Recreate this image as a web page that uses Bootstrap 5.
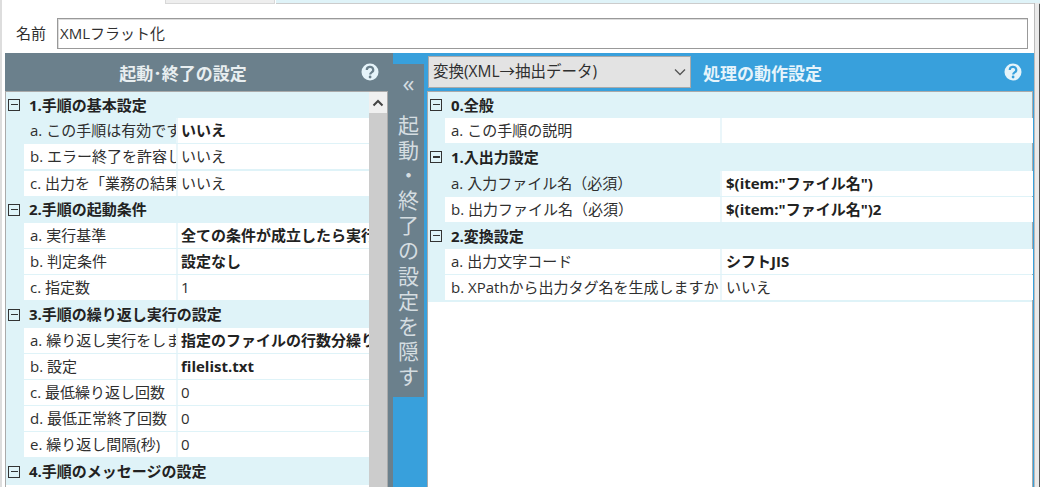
<!DOCTYPE html>
<html lang="ja"><head><meta charset="utf-8">
<link href="https://cdn.jsdelivr.net/npm/bootstrap@5.3.0/dist/css/bootstrap.min.css" rel="stylesheet">
<style>
html,body{height:487px;overflow:hidden;background:#fff}
body{font-family:"Open Sans","Noto Sans CJK JP",sans-serif;font-size:15px;color:#2f2f2f;line-height:1}
.jp{font-family:"Noto Sans CJK JP",sans-serif}
.frame{height:487px;width:1040px;border-left:2px solid #ddd;border-right:1px solid #555;position:relative}
.edge{position:absolute;right:0;top:3px;bottom:0;width:5px;background:#eaeaea;border-left:1px solid #bbb}
.tabstrip{height:4px;margin-left:163px;margin-right:-1px}
.tab-off{width:110px;background:#eee;border:1px solid #d8d8d8;border-top:0;margin-right:1px}
.tab-on{background:#dff3f8;border-bottom:1px solid #ccc}
.namerow{height:49px;padding:10px 8px 0 14px}
.namelbl{width:41px}
.nameinp{height:31px;width:971px;border:1px solid #999;padding:0 2px;line-height:29px;box-shadow:inset 1px 1px 0 #ddd}
.panels{height:434px;padding-left:3px}
.pleft{width:388px;background:#6b808c;padding-right:5px}
.phead{height:38px;color:#e8eef0;font-weight:700;font-size:17px}
.ttl-l{width:352px;text-align:center;padding-left:4px;flex:none}
.ico-l{margin-left:4px}
.qicon{width:18px;height:18px;display:block;flex:none}
.treewrap{height:396px;width:383px;border:1px solid #aaa;border-bottom:0;background:#fff;overflow:hidden}
.treecol{width:363px;overflow:hidden;flex:none}
.sbar{width:18px;background:#ccc;flex:none}
.sup{height:21px;background:#f0f0f0}
.grp{height:26.2px;background:#dff3f8;font-weight:700;color:#222}
.box{width:12px;height:12px;border:1.4px solid #333;margin:0 9px 0 2px;flex:none;position:relative;display:block}
.box::after{content:"";position:absolute;left:1.5px;right:1.5px;top:4px;height:1.4px;background:#333}
.rw{height:26.2px;background:#dff3f8;padding-left:18px}
.lab,.val{height:25px;background:#fff;white-space:nowrap;overflow:hidden;padding-left:6px;line-height:25px;flex:none}
.lab.tint{background:#dff3f8}
.rw .gapx{width:2px;background:#eaf6fa;flex:none;height:25px}
.lw-l{width:152px}.vw-l{width:191px;padding-left:3px}
.strong{font-weight:700;color:#222}
.pright{width:641px;background:#38a0dc;position:relative}
.hide-bar{position:absolute;left:0;top:11px;width:31px;height:333px;background:#6b808c;color:#d5dde1;text-align:center;z-index:1}
.chev{font-size:24px;height:40px;line-height:38px}
.vtxt{font-size:21px;line-height:25.1px;margin-top:8px}
.vtxt span{display:block}
.rhead{height:38px;padding-left:35px}
.sel{width:263px;height:32px;background:#e3e3e3;border:1px solid #aaa;padding:0 4px;font-size:15.5px;margin-right:12px;flex:none}
.ttl-r{color:#e6f4fb;font-weight:700;font-size:17px;width:301px;flex:none}
.rbody{margin-left:34px;width:606px;height:396px;background:#fff;border-top:1px solid #aaa;border-left:1px solid #aaa;border-right:1px solid #aaa;margin-right:1px}
.lw-r{width:275px}.vw-r{width:311px;padding-left:4px}
.rbody .rw{padding-left:17px}
</style></head><body>
<div class="frame">
<div class="edge"></div>
<div class="tabstrip d-flex"><div class="tab-off"></div><div class="tab-on flex-grow-1"></div></div>
<div class="namerow d-flex align-items-center">
<div class="namelbl">名前</div><div class="nameinp">XMLフラット化</div>
</div>
<div class="panels d-flex">
<div class="pleft">
<div class="phead d-flex align-items-center"><div class="ttl-l jp">起動･終了の設定</div>
<svg class="qicon ico-l" viewBox="0 0 18 18"><circle cx="9" cy="9" r="8.5" fill="#e6f4fa"/><path d="M5.8 7a3.2 3 0 1 1 4.6 2.6c-.9.5-1.2.9-1.2 2" fill="none" stroke="#6b808c" stroke-width="2.2"/><circle cx="9.1" cy="14" r="1.4" fill="#6b808c"/></svg></div>
<div class="treewrap d-flex">
<div class="treecol">
<div class="grp d-flex align-items-center"><i class="box"></i>1.手順の基本設定</div>
<div class="rw d-flex"><div class="lab tint lw-l">a. この手順は有効ですか</div><div class="gapx"></div><div class="val vw-l strong">いいえ</div></div>
<div class="rw d-flex"><div class="lab lw-l">b. エラー終了を許容しますか</div><div class="gapx"></div><div class="val vw-l">いいえ</div></div>
<div class="rw d-flex"><div class="lab lw-l">c. 出力を「業務の結果」に</div><div class="gapx"></div><div class="val vw-l">いいえ</div></div>
<div class="grp d-flex align-items-center"><i class="box"></i>2.手順の起動条件</div>
<div class="rw d-flex"><div class="lab lw-l">a. 実行基準</div><div class="gapx"></div><div class="val vw-l strong">全ての条件が成立したら実行</div></div>
<div class="rw d-flex"><div class="lab lw-l">b. 判定条件</div><div class="gapx"></div><div class="val vw-l strong">設定なし</div></div>
<div class="rw d-flex"><div class="lab lw-l">c. 指定数</div><div class="gapx"></div><div class="val vw-l">1</div></div>
<div class="grp d-flex align-items-center"><i class="box"></i>3.手順の繰り返し実行の設定</div>
<div class="rw d-flex"><div class="lab lw-l">a. 繰り返し実行をします</div><div class="gapx"></div><div class="val vw-l strong">指定のファイルの行数分繰り返す</div></div>
<div class="rw d-flex"><div class="lab lw-l">b. 設定</div><div class="gapx"></div><div class="val vw-l strong">filelist.txt</div></div>
<div class="rw d-flex"><div class="lab lw-l">c. 最低繰り返し回数</div><div class="gapx"></div><div class="val vw-l">0</div></div>
<div class="rw d-flex"><div class="lab lw-l">d. 最低正常終了回数</div><div class="gapx"></div><div class="val vw-l">0</div></div>
<div class="rw d-flex"><div class="lab lw-l">e. 繰り返し間隔(秒)</div><div class="gapx"></div><div class="val vw-l">0</div></div>
<div class="grp d-flex align-items-center"><i class="box"></i>4.手順のメッセージの設定</div>
</div>
<div class="sbar"><div class="sup d-flex align-items-center justify-content-center"><svg width="12" height="8" viewBox="0 0 12 8"><path d="M1.5 6.5 6 2l4.500 4.500" fill="none" stroke="#444" stroke-width="2"/></svg></div></div>
</div>
</div>
<div class="pright">
<div class="hide-bar"><div class="chev">«</div><div class="vtxt jp"><span>起</span><span>動</span><span>・</span><span>終</span><span>了</span><span>の</span><span>設</span><span>定</span><span>を</span><span>隠</span><span>す</span></div></div>
<div class="rhead d-flex align-items-center">
<div class="sel d-flex align-items-center justify-content-between"><span>変換(XML→抽出データ)</span><svg width="12" height="8" viewBox="0 0 12 8"><path d="M1 1.500 6 6.500l5-5" fill="none" stroke="#555" stroke-width="1.300"/></svg></div>
<div class="ttl-r jp">処理の動作設定</div>
<svg class="qicon" viewBox="0 0 18 18"><circle cx="9" cy="9" r="8.500" fill="#e6f4fa"/><path d="M5.800 7a3.200 3 0 1 1 4.600 2.600c-.9.500-1.200.9-1.200 2" fill="none" stroke="#38a0dc" stroke-width="2.200"/><circle cx="9.100" cy="14" r="1.400" fill="#38a0dc"/></svg>
</div>
<div class="rbody">
<div class="grp d-flex align-items-center"><i class="box"></i>0.全般</div>
<div class="rw d-flex"><div class="lab lw-r">a. この手順の説明</div><div class="gapx"></div><div class="val vw-r"></div></div>
<div class="grp d-flex align-items-center"><i class="box"></i>1.入出力設定</div>
<div class="rw d-flex"><div class="lab tint lw-r">a. 入力ファイル名（必須）</div><div class="gapx"></div><div class="val vw-r strong">$(item:"ファイル名")</div></div>
<div class="rw d-flex"><div class="lab lw-r">b. 出力ファイル名（必須）</div><div class="gapx"></div><div class="val vw-r strong">$(item:"ファイル名")2</div></div>
<div class="grp d-flex align-items-center"><i class="box"></i>2.変換設定</div>
<div class="rw d-flex"><div class="lab lw-r">a. 出力文字コード</div><div class="gapx"></div><div class="val vw-r strong">シフトJIS</div></div>
<div class="rw d-flex"><div class="lab lw-r">b. XPathから出力タグ名を生成しますか</div><div class="gapx"></div><div class="val vw-r">いいえ</div></div>
</div>
</div>
</div>
</div>
<script src="https://cdn.jsdelivr.net/npm/bootstrap@5.3.0/dist/js/bootstrap.bundle.min.js"></script>
</body></html>
